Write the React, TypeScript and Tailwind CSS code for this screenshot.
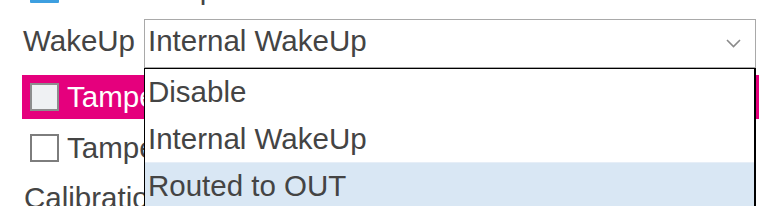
import React from "react";

function Checkbox({ checked, tone }: { checked?: boolean; tone?: "pink" | "plain" }) {
  if (checked) {
    return <div className="w-[29px] h-[29px] shrink-0 bg-[#3d9fe0] rounded-[1px]" />;
  }
  if (tone === "pink") {
    return <div className="w-[29px] h-[28px] shrink-0 border-2 border-[#8d8d8d] bg-[#eff1f3]" />;
  }
  return <div className="w-[29px] h-[28px] shrink-0 border-2 border-[#7d7d7d] bg-white" />;
}

export default function App() {
  const font = { fontFamily: '"Liberation Sans", Arial, sans-serif' };
  return (
    <div
      className="relative w-[759px] h-[206px] overflow-hidden bg-white text-[29.5px] leading-[30px] text-[#444444]"
      style={font}
    >
      <div className="flex flex-col mt-[-26px]">
        {/* Row 1: checked option (mostly cut off) */}
        <div className="flex items-center h-[29px] pl-[30px] gap-[8px]">
          <Checkbox checked />
          <span className="whitespace-nowrap">Alarm Output</span>
        </div>

        {/* Row 2: WakeUp select */}
        <div className="flex items-center mt-[16px] h-[49px]">
          <span className="w-[144px] pl-[23px] pb-[6px] whitespace-nowrap">WakeUp</span>
          <div className="flex items-center justify-between w-[612px] h-[49px] border border-[#a9a9a9] bg-white pl-[3px] pr-[14px] pb-[6px]">
            <span className="whitespace-nowrap">Internal WakeUp</span>
            <svg width="15" height="9" viewBox="0 0 15 9" className="mt-[6px]">
              <path d="M1 1 L7.5 7.5 L14 1" fill="none" stroke="#8a8a8a" strokeWidth="1.6" />
            </svg>
          </div>
        </div>

        {/* Row 3: highlighted Tamper row */}
        <div className="flex items-center mt-[7px] ml-[22px] h-[44px] pl-[8px] gap-[8px] bg-[#e5007d] text-white">
          <Checkbox tone="pink" />
          <span className="whitespace-nowrap">Tamper 1</span>
        </div>

        {/* Row 4: Tamper row */}
        <div className="flex items-center mt-[7px] h-[44px] pl-[30px] gap-[8px]">
          <Checkbox />
          <span className="whitespace-nowrap">Tamper 2</span>
        </div>

        {/* Row 5: Calibration */}
        <div className="mt-[13px] pl-[24px] whitespace-nowrap">Calibration</div>
      </div>

      {/* Open dropdown list */}
      <div className="absolute left-[144px] top-[68px] w-[612px] border border-black border-r-2 bg-white">
        <div className="h-[46.5px] flex items-center pl-[3px] whitespace-nowrap">Disable</div>
        <div className="h-[46.5px] flex items-center pl-[3px] whitespace-nowrap">Internal WakeUp</div>
        <div className="h-[46.5px] flex items-center pl-[3px] bg-[#d9e7f4] border-t border-[#e6eef7] whitespace-nowrap">
          Routed to OUT
        </div>
      </div>
    </div>
  );
}
